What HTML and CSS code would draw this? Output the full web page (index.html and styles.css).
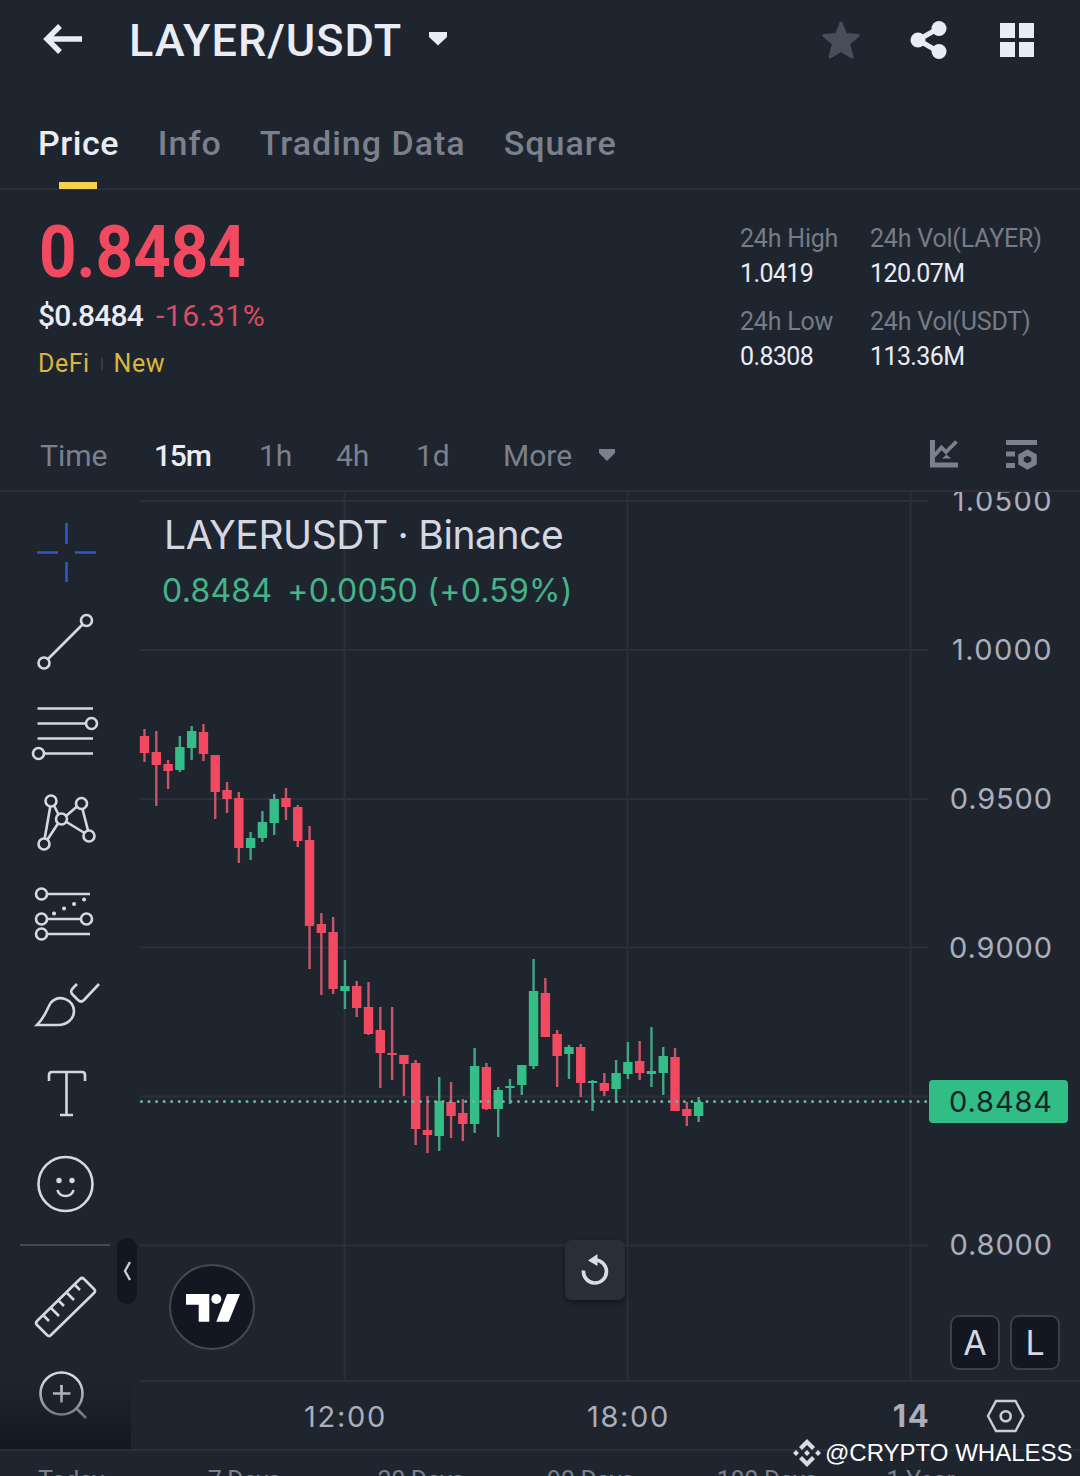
FILE: index.html
```html
<!DOCTYPE html>
<html lang="en">
<head>
    <meta charset="UTF-8">
    <meta name="viewport" content="width=device-width, initial-scale=1.0">
    <title>LAYER/USDT</title>
    <link rel="stylesheet" href="styles.css">
</head>
<body>
    <header class="topbar">
        <svg class="back" width="40" height="32" viewBox="0 0 40 32"><path d="M17 3 4 16l13 13M5 16h34" fill="none" stroke="#eaecf4" stroke-width="5.4"/></svg>
        <h1 class="pair">LAYER/USDT</h1>
        <svg class="caret" width="20" height="15" viewBox="0 0 20 15"><path d="M1 1h18v5l-9 8.500L1 6z" fill="#eaecf4"/></svg>
        <div class="actions">
            <svg width="38" height="40" viewBox="0 0 38 40"><path d="M19 3l4.600 11.500 12.400 1-9.500 8.200 3.500 13.300-11-6.500L8 37l3.500-13.300L2 15.500l12.400-1z" fill="#474d59" stroke="#474d59" stroke-width="3" stroke-linejoin="round"/></svg>
            <svg width="37" height="40" viewBox="0 0 37 40"><path d="M29 8 8 20l21 12" fill="none" stroke="#eaecf4" stroke-width="5"/><circle cx="29" cy="8.500" r="7.500" fill="#eaecf4"/><circle cx="8" cy="20" r="7.500" fill="#eaecf4"/><circle cx="29" cy="31.500" r="7.500" fill="#eaecf4"/></svg>
            <svg width="34" height="34" viewBox="0 0 34 34"><path d="M0 0h15v15H0zM19 0h15v15H19zM0 19h15v15H0zM19 19h15v15H19z" fill="#eaecf4"/></svg>
        </div>
    </header>

    <nav class="tabs">
        <a class="tab active">Price</a>
        <a class="tab">Info</a>
        <a class="tab">Trading Data</a>
        <a class="tab">Square</a>
    </nav>

    <section class="summary">
        <div class="quote">
            <div class="price">0.8484</div>
            <div class="change"><span class="usd">$0.8484</span><span class="percent">-16.31%</span></div>
            <div class="tags"><span>DeFi</span><i></i><span>New</span></div>
        </div>
        <div class="stats">
            <dl><dt>24h High</dt><dd>1.0419</dd></dl>
            <dl><dt>24h Vol(LAYER)</dt><dd>120.07M</dd></dl>
            <dl><dt>24h Low</dt><dd>0.8308</dd></dl>
            <dl><dt>24h Vol(USDT)</dt><dd>113.36M</dd></dl>
        </div>
    </section>

    <nav class="intervals">
        <span>Time</span>
        <span class="active">15m</span>
        <span>1h</span>
        <span>4h</span>
        <span>1d</span>
        <span>More</span>
        <svg width="16" height="12" viewBox="0 0 16 12"><path d="M0 0h16v4l-8 8-8-8z" fill="#7b808c"/></svg>
        <div class="chart-icons">
            <svg width="28" height="28" viewBox="0 0 28 28" fill="none" stroke="#7b808c"><path d="M2.500 0v25H28" stroke-width="5"/><path d="M4 16l7.500-8.500 4.500 4.500L26.500 1.500" stroke-width="3.800"/><path d="M12 18.500l4.500-4 4.500 4z" fill="#7b808c" stroke="none"/></svg>
            <svg width="32" height="30" viewBox="0 0 32 30"><path d="M0 0h31v5H0zM0 11.500h9v5H0zM0 23h9v5H0z" fill="#7b808c"/><path d="M21.500 12.500l6.500 3.700v6.600l-6.500 3.700-6.500-3.700v-6.600z" fill="none" stroke="#7b808c" stroke-width="5.500"/></svg>
        </div>
    </nav>

    <main class="chart">
        <aside class="tools">
            <svg viewBox="0 0 131 90" class="cross"><path d="M66.500 16v21M66.500 55v20M37 45.500h21M75 45.500h21"/></svg>
            <svg viewBox="0 0 131 90"><path d="M48 62 82.500 27.500"/><circle cx="86.500" cy="23.500" r="5.500"/><circle cx="44" cy="66" r="5.500"/></svg>
            <svg viewBox="0 0 131 90"><path d="M37.500 21.500H93M37.500 36.500H86M37.500 51.500H93M44 66.500h49"/><circle cx="91.500" cy="36.500" r="5.500"/><circle cx="38.500" cy="66.500" r="5.500"/></svg>
            <svg viewBox="0 0 131 90"><path d="M50.300 29.500 44.700 61.500M54 28.500l4.500 9M66 39l11-9.500M82.500 32l5.500 21.500M66.500 45l18 11M58 46.500 47.500 62.500"/><circle cx="51" cy="24" r="5.500"/><circle cx="81.500" cy="26.500" r="5.500"/><circle cx="61.500" cy="42" r="5.500"/><circle cx="89" cy="59" r="5.500"/><circle cx="44" cy="67" r="5.500"/></svg>
            <svg viewBox="0 0 131 90"><path d="M47 27h43M47 52h34M47 67h43"/><path d="M54 46.500h.1M64 41.500h.1M74 37h.1M84 32.500h.1" stroke-linecap="round" class="dots"/><circle cx="41.500" cy="27" r="5.500"/><circle cx="41.500" cy="52" r="5.500"/><circle cx="86.500" cy="52" r="5.500"/><circle cx="41.500" cy="67" r="5.500"/></svg>
            <svg viewBox="0 0 131 90"><path d="M37 68C46 59 48 49 51 45.500A13.300 13.300 0 0 1 74 54c0 8-7 14-16 14zM77 27l-4 4c-3 3-2 5 0 7l5 5c2 2 4 2 6 0L99 27"/></svg>
            <svg viewBox="0 0 131 90"><path d="M49 34v-6q0-3 3-3h30q3 0 3 3v6M66.500 25v43M60 68h13"/></svg>
            <svg viewBox="0 0 131 90"><circle cx="65.500" cy="47" r="27"/><path d="M57.500 53c2 8 14 8 16 0"/><g class="eyes"><circle cx="59" cy="43.500" r="2.700"/><circle cx="72" cy="43.500" r="2.700"/></g></svg>
            <hr>
            <svg viewBox="0 0 131 90"><path d="M80 17q2-2 4 0l10 10q2 2 0 4L51 73q-2 2-4 0L37 63q-2-2 0-4zM43.500 53.500l5.500 5.500M51 46l8 8M58.500 38.500l5.500 5.500M66.500 30.500l7.500 7.500M74.500 22.500l5.500 5.500"/></svg>
            <svg viewBox="0 0 131 90"><circle cx="61.500" cy="41.500" r="21"/><path d="M53 41.500h17.500M61.500 33v17.500M76 56l10 10"/></svg>
            <div class="fade"></div>
        </aside>

        <div class="plot">
            <!-- viewBox starts at the plot's own corner on the page -->
            <svg class="plot-svg" viewBox="131 492 949 957">
                <g stroke="#2b303b" stroke-width="2">
                    <path d="M140 501h788M140 650h788M140 799h788M140 947.500h788M140 1096.500h788M140 1245.500h788"/>
                    <path d="M344.500 491v890M627.500 491v890M910.500 491v890M140 1381h940"/>
                </g>
                <g id="candles"></g>
                <path d="M141.500 1101.500H928" stroke="#70b3a0" stroke-width="3" stroke-linecap="round" stroke-dasharray="0 7.540"/>
                <g class="axis">
                    <text class="wide" x="1053" y="511">1.0500</text>
                    <text class="wide" x="1053" y="660">1.0000</text>
                    <text x="1053" y="809">0.9500</text>
                    <text x="1053" y="958">0.9000</text>
                    <text x="1053" y="1255">0.8000</text>
                </g>
                <rect x="929" y="1080" width="139" height="43" rx="4" fill="#31bd86"/>
                <g class="axis"><text class="last" x="1053" y="1112">0.8484</text></g>
                <g class="times">
                    <text x="345.500" y="1427">12:00</text>
                    <text x="628.500" y="1427">18:00</text>
                    <text class="day" x="911.500" y="1427">14</text>
                </g>
                <path d="M996 1401h19.500l8 15-8 15H996l-8-15z" fill="none" stroke="#c9cdd8" stroke-width="2.400"/>
                <circle cx="1005.700" cy="1416.300" r="5" fill="none" stroke="#c9cdd8" stroke-width="2.600"/>
            </svg>

            <div class="legend">
                <div class="symbol">LAYERUSDT · Binance</div>
                <div class="values"><span>0.8484</span><span>+0.0050 (+0.59%)</span></div>
            </div>
            <button class="collapse"><svg width="10" height="20" viewBox="0 0 10 20"><path d="M8 1 3 10l5 9" fill="none" stroke="#c9cdd8" stroke-width="2.400"/></svg></button>
            <div class="tv-logo">
                <svg width="54" height="28" viewBox="0 0 54 28" fill="#fff"><path d="M0 0h23.300v27.700H12.700V10.700H0zM41 0h13L42.700 27.700H30.300z"/><circle cx="30.300" cy="5" r="5"/></svg>
            </div>
            <button class="reset"><svg width="30" height="34" viewBox="0 0 30 34"><path d="M3.500 17.500A11.500 11.500 0 1 0 15 7" fill="none" stroke="#dadde6" stroke-width="3.600"/><path d="M17.500 1v12L8 7.500z" fill="#dadde6"/></svg></button>
            <div class="scale-buttons"><button>A</button><button>L</button></div>
        </div>
    </main>

    <footer class="ranges">
        <span>Today</span><span>7 Days</span><span>30 Days</span><span>90 Days</span><span>180 Days</span><span>1 Year</span>
    </footer>

    <div class="watermark">
        <svg width="28" height="28" viewBox="0 0 28 28" fill="#d9dbe6"><path d="M14 0l8 8-3 3-5-5-5 5-3-3zM14 28l8-8-3-3-5 5-5-5-3 3zM14 11l3 3-3 3-3-3zM3 11l3 3-3 3-3-3zM25 11l3 3-3 3-3-3z"/></svg>
        <span>@CRYPTO WHALESS</span>
    </div>

    <script>
        // direction, high, body top, body bottom, low
        const candles = [
            ['r', 729, 736, 753, 762], ['r', 731, 752, 765, 806], ['r', 760, 764, 771, 789],
            ['g', 736, 747, 770, 772], ['g', 726, 731, 748, 760], ['r', 724, 732, 754, 761],
            ['r', 755, 755, 792, 819], ['r', 782, 790, 799, 813], ['r', 792, 798, 848, 863],
            ['g', 832, 838, 848, 860], ['g', 811, 822, 838, 842], ['g', 794, 799, 823, 835],
            ['r', 788, 798, 807, 820], ['r', 805, 807, 841, 847], ['r', 826, 840, 926, 969],
            ['r', 913, 924, 933, 995], ['r', 917, 932, 989, 994], ['g', 960, 986, 991, 1009],
            ['r', 981, 986, 1008, 1017], ['r', 982, 1007, 1034, 1035], ['r', 1007, 1030, 1053, 1088],
            ['r', 1007, 1053, 1055, 1080], ['r', 1055, 1055, 1064, 1096], ['r', 1060, 1063, 1129, 1145],
            ['r', 1096, 1130, 1135, 1153], ['g', 1077, 1101, 1136, 1151], ['r', 1082, 1102, 1116, 1138],
            ['r', 1099, 1113, 1124, 1141], ['g', 1048, 1066, 1124, 1133], ['r', 1063, 1067, 1109, 1110],
            ['g', 1087, 1090, 1109, 1137], ['g', 1079, 1086, 1088, 1104], ['g', 1065, 1065, 1085, 1095],
            ['g', 959, 991, 1066, 1069], ['r', 978, 993, 1037, 1037], ['r', 1030, 1034, 1056, 1087],
            ['g', 1045, 1047, 1054, 1079], ['r', 1044, 1047, 1083, 1097], ['g', 1080, 1081, 1083, 1111],
            ['r', 1073, 1083, 1091, 1096], ['g', 1060, 1073, 1089, 1103], ['g', 1042, 1062, 1074, 1079],
            ['r', 1041, 1061, 1073, 1080], ['g', 1027, 1071, 1074, 1087], ['g', 1047, 1056, 1073, 1095],
            ['r', 1048, 1057, 1111, 1111], ['r', 1102, 1109, 1116, 1126], ['g', 1097, 1102, 1116, 1122]
        ];

        let shapes = '';
        candles.forEach(([dir, high, top, bottom, low], i) => {
            const x = 144.5 + i * 11.79;
            shapes += `<rect class="wick-${dir}" x="${x - 1.2}" y="${high}" width="2.4" height="${low - high}"/>`;
            shapes += `<rect class="body-${dir}" x="${x - 4.7}" y="${top}" width="9.4" height="${bottom - top}"/>`;
        });
        document.getElementById('candles').innerHTML = shapes;
    </script>
</body>
</html>
```
FILE: styles.css
```css
* {
    margin: 0;
    padding: 0;
    box-sizing: border-box;
}
body {
    width: 1080px;
    height: 1476px;
    overflow: hidden;
    position: relative;
    background-color: #1f252f;
    color: #eaecf4;
    font-family: Roboto, "Liberation Sans", sans-serif;
}
svg {
    display: block;
    flex: none;
}
button {
    border: none;
    font: inherit;
    color: inherit;
}

/* Header */
.topbar {
    display: flex;
    align-items: center;
    height: 80px;
    padding: 0 46px 0 43px;
}
.back {
    margin-top: -3px;
}
.pair {
    width: 270px;
    margin-left: 46px;
    padding-top: 2px;
    font-size: 45px;
    font-weight: 500;
    line-height: 80px;
    letter-spacing: 1px;
    white-space: nowrap;
}
.caret {
    margin: -4px 0 0 29px;
}
.actions {
    display: flex;
    align-items: center;
    margin-left: auto;
}
.actions svg + svg {
    margin-left: 50px;
}
.actions svg:last-child {
    margin-left: 53px;
}

.tabs {
    display: flex;
    gap: 38px;
    height: 110px;
    padding-left: 38px;
    border-bottom: 2px solid #292e38;
    font-size: 34px;
    font-weight: 500;
    line-height: 127px;
    letter-spacing: 1px;
    white-space: nowrap;
    color: #7b808c;
}
.tab.active {
    position: relative;
    margin-right: 1px;
    letter-spacing: 0.5px;
    color: #eaecf4;
}
.tab.active::after {
    content: "";
    position: absolute;
    left: 21px;
    bottom: -1px;
    width: 38px;
    height: 7px;
    background-color: #f8d14b;
}

/* Price and 24h numbers */
.summary {
    display: flex;
    justify-content: space-between;
    height: 230px;
    padding: 32px 30px 0 38px;
}
.price {
    width: 230px;
    margin-left: 1px;
    font-size: 72px;
    font-weight: 700;
    line-height: 61px;
    color: #f14a60;
    transform: scaleX(0.91);
    transform-origin: left;
}
.change {
    display: flex;
    gap: 13px;
    margin-top: 15px;
    font-size: 30px;
    font-weight: 500;
    line-height: 36px;
}
.usd {
    letter-spacing: -0.8px;
}
.percent {
    font-weight: 400;
    letter-spacing: 0.5px;
    color: #dc4c60;
}
.tags {
    display: flex;
    align-items: center;
    gap: 11px;
    margin-top: 14px;
    font-size: 25px;
    line-height: 31px;
    letter-spacing: 0.5px;
    color: #dcb53f;
}
.tags i {
    width: 2px;
    height: 12px;
    background-color: #343a45;
}
.stats {
    display: grid;
    grid-template-columns: 130px 180px;
    grid-auto-rows: 83px;
    font-size: 25px;
}
.stats dt {
    line-height: 33px;
    letter-spacing: -0.2px;
    color: #757b87;
    white-space: nowrap;
}
.stats dd {
    line-height: 37px;
    letter-spacing: -0.6px;
}

.intervals {
    display: grid;
    grid-template-columns: 114px 105px 77px 80px 87px 96px 16px 1fr;
    align-items: center;
    height: 72px;
    padding: 0 42px 0 40px;
    border-bottom: 2px solid #292e38;
    font-size: 30px;
    color: #7b808c;
}
.intervals .active {
    font-weight: 500;
    letter-spacing: -1.2px;
    color: #eaecf4;
}
.intervals svg {
    margin-top: -1px;
}
.chart-icons {
    display: flex;
    justify-content: flex-end;
    gap: 48px;
}

/* Chart */
.chart {
    display: flex;
    height: 959px;
    border-bottom: 2px solid #292e38;
}
.tools {
    position: relative;
    width: 131px;
    padding-top: 15px;
}
.tools svg {
    width: 131px;
    height: 90px;
    fill: none;
    stroke: #d5d8e2;
    stroke-width: 2.6;
}
.tools .cross {
    stroke: #3157c8;
}
.tools .dots {
    stroke-width: 4;
}
.tools .eyes {
    fill: #d5d8e2;
    stroke: none;
}
.tools hr {
    width: 90px;
    height: 2px;
    margin: 17px 0 16px 20px;
    border: none;
    background-color: #434853;
}
.fade {
    position: absolute;
    left: 0;
    bottom: 0;
    width: 131px;
    height: 70px;
    background: linear-gradient(rgba(19, 23, 34, 0), rgba(19, 23, 34, 0.95));
}
.plot {
    position: relative;
    width: 949px;
    font-family: Inter, "Liberation Sans", sans-serif;
}
.plot-svg {
    width: 949px;
    height: 957px;
}
.wick-r { fill: #c65668; }
.wick-g { fill: #42a684; }
.body-r { fill: #f14a60; }
.body-g { fill: #35bd87; }
.axis {
    font-size: 29px;
    letter-spacing: 0.9px;
    text-anchor: end;
    fill: #abaebb;
}
.axis .wide {
    letter-spacing: 1.4px;
}
.axis .last {
    fill: #18242a;
}
.times {
    font-size: 29px;
    letter-spacing: 1.7px;
    text-anchor: middle;
    fill: #abaebb;
}
.times .day {
    font-size: 31px;
    font-weight: 700;
}
.legend {
    position: absolute;
    left: 31px;
    top: 18px;
    white-space: nowrap;
}
.symbol {
    margin-left: 2px;
    font-size: 39px;
    line-height: 50px;
    letter-spacing: -0.4px;
    word-spacing: -0.7px;
    color: #d5d8e2;
}
.values {
    display: flex;
    gap: 15px;
    margin-top: 11px;
    font-size: 32px;
    line-height: 40px;
    letter-spacing: 0.25px;
    color: #45b488;
}
.collapse {
    position: absolute;
    left: -14px;
    top: 746px;
    display: flex;
    align-items: center;
    justify-content: center;
    width: 20px;
    height: 66px;
    border-radius: 9px;
    background-color: #131722;
}
.tv-logo {
    position: absolute;
    left: 38px;
    top: 772px;
    display: flex;
    align-items: center;
    justify-content: center;
    width: 86px;
    height: 86px;
    padding: 2px 0 0 1px;
    border: 2px solid #434853;
    border-radius: 50%;
    background-color: #131722;
}
.reset {
    position: absolute;
    left: 434px;
    top: 748px;
    display: flex;
    align-items: center;
    justify-content: center;
    width: 60px;
    height: 60px;
    border-radius: 7px;
    background-color: #2a2e39;
    box-shadow: 0 3px 6px rgba(0, 0, 0, 0.4);
}
.scale-buttons {
    position: absolute;
    left: 819px;
    top: 823px;
    display: flex;
    gap: 10px;
}
.scale-buttons button {
    width: 50px;
    height: 55px;
    border: 2px solid #3a3f4a;
    border-radius: 9px;
    background-color: #131722;
    font-size: 34px;
    color: #d5d8e2;
}

.ranges {
    display: grid;
    grid-template-columns: repeat(6, 169.7px);
    height: 25px;
    padding: 15px 0 0 38px;
    font-size: 25px;
    line-height: 30px;
    letter-spacing: -0.3px;
    white-space: nowrap;
    color: #7b808c;
}
.watermark {
    position: absolute;
    left: 793px;
    top: 1438px;
    display: flex;
    align-items: center;
    gap: 4px;
    font-family: "Liberation Sans", Arial, sans-serif;
    font-size: 24px;
    line-height: 29px;
    color: #fff;
    white-space: nowrap;
}
```
